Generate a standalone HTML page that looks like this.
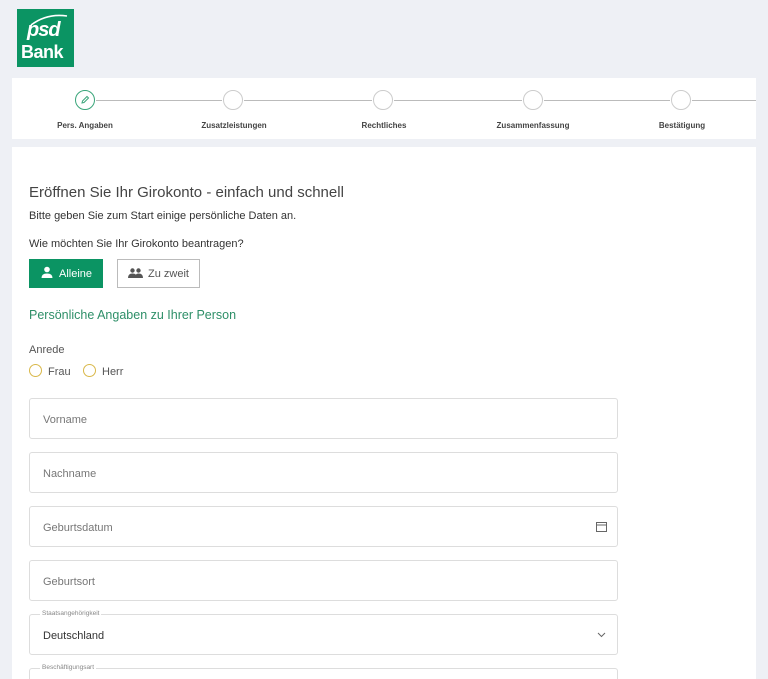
<!DOCTYPE html>
<html style="overflow:hidden;height:679px"><head><meta charset="utf-8"><style>
*{box-sizing:border-box;margin:0;padding:0}
body{width:768px;height:679px;overflow:hidden;background:#eef0f5;font-family:"Liberation Sans",sans-serif;color:#333;position:relative}
.logo{position:absolute;left:17px;top:9px;width:57px;height:58px;background:#0b9463;color:#fff}
.card1{position:absolute;left:12px;top:78px;width:744px;height:61px;background:#fff}
.card2{position:absolute;left:12px;top:147px;width:744px;height:532px;background:#fff}
.circ{position:absolute;top:90px;width:20px;height:20px;border:1px solid #ccc;border-radius:50%;background:#fff}
.line{position:absolute;top:100px;height:1px;background:#bbb}
.lab{position:absolute;top:121px;font-size:8px;font-weight:bold;color:#444;transform:translateX(-50%);white-space:nowrap}
.t{position:absolute;white-space:nowrap}
.inp{position:absolute;left:29px;width:589px;height:41px;border:1px solid #ddd;border-radius:3px;background:#fff}
.inp span{position:absolute;left:13px;top:15px;font-size:11px;color:#777}
.leg{position:absolute;left:10px;top:-5px;background:#fff;padding:0 2px;font-size:6.5px;color:#888}
.radio{position:absolute;width:13px;height:13px;border:1px solid #d9b84a;border-radius:50%}
</style></head><body>
<div class="logo">
<svg width="57" height="58" viewBox="0 0 57 58"><path d="M14 16 Q30 4 50 7" stroke="#fff" stroke-width="1.6" fill="none"/></svg>
<div class="t" style="left:10px;top:10px;font-size:20px;font-weight:bold;font-style:italic;letter-spacing:-1px">psd</div>
<div class="t" style="left:4px;top:33px;font-size:18px;font-weight:bold;letter-spacing:-0.5px">Bank</div>
</div>
<div class="card1"></div>
<div class="line" style="left:96px;width:126px"></div>
<div class="line" style="left:244px;width:128px"></div>
<div class="line" style="left:394px;width:128px"></div>
<div class="line" style="left:544px;width:126px"></div>
<div class="line" style="left:692px;width:64px"></div>
<div class="circ" style="left:75px;border-color:#3aa57a"><svg width="18" height="18" viewBox="0 0 18 18"><path d="M6 12 L6.5 10 L11 5.5 L12.5 7 L8 11.5 Z" stroke="#3aa57a" fill="none" stroke-width="1"/></svg></div>
<div class="circ" style="left:223px"></div>
<div class="circ" style="left:373px"></div>
<div class="circ" style="left:523px"></div>
<div class="circ" style="left:671px"></div>
<div class="lab" style="left:85px">Pers. Angaben</div>
<div class="lab" style="left:234px">Zusatzleistungen</div>
<div class="lab" style="left:384px">Rechtliches</div>
<div class="lab" style="left:533px">Zusammenfassung</div>
<div class="lab" style="left:682px">Bestätigung</div>
<div class="card2"></div>
<div class="t" style="left:29px;top:184px;font-size:15px;color:#444">Eröffnen Sie Ihr Girokonto - einfach und schnell</div>
<div class="t" style="left:29px;top:210px;font-size:11px">Bitte geben Sie zum Start einige persönliche Daten an.</div>
<div class="t" style="left:29px;top:238px;font-size:11px">Wie möchten Sie Ihr Girokonto beantragen?</div>
<div class="t" style="left:29px;top:259px;width:74px;height:29px;background:#0b9463;color:#fff;font-size:11px;line-height:31px;padding-left:30px">Alleine</div>
<svg class="t" style="left:41px;top:266px" width="12" height="12" viewBox="0 0 12 12"><circle cx="6" cy="3.5" r="2.8" fill="#fff"/><path d="M0.5 12 Q0.5 7.5 6 7.5 Q11.5 7.5 11.5 12Z" fill="#fff"/></svg>
<div class="t" style="left:117px;top:259px;width:83px;height:29px;border:1px solid #bbb;font-size:11px;line-height:29px;padding-left:30px;color:#555">Zu zweit</div>
<svg class="t" style="left:128px;top:268px" width="15" height="10" viewBox="0 0 15 10"><circle cx="4.5" cy="2.5" r="2.2" fill="#555"/><circle cx="10.5" cy="2.5" r="2.2" fill="#555"/><path d="M0 10 Q0 5.5 4.5 5.5 Q9 5.5 9 10Z M7 10 Q7 5.5 10.5 5.5 Q15 5.5 15 10Z" fill="#555"/></svg>
<div class="t" style="left:29px;top:308px;font-size:12.5px;color:#2e8f68">Persönliche Angaben zu Ihrer Person</div>
<div class="t" style="left:29px;top:344px;font-size:11px;color:#555">Anrede</div>
<div class="radio" style="left:29px;top:364px"></div>
<div class="t" style="left:48px;top:366px;font-size:11px;color:#555">Frau</div>
<div class="radio" style="left:83px;top:364px"></div>
<div class="t" style="left:102px;top:366px;font-size:11px;color:#555">Herr</div>
<div class="inp" style="top:398px"><span>Vorname</span></div>
<div class="inp" style="top:452px"><span>Nachname</span></div>
<div class="inp" style="top:506px"><span>Geburtsdatum</span>
<svg style="position:absolute;right:10px;top:14px" width="11" height="11" viewBox="0 0 11 11"><rect x="0.5" y="1.5" width="10" height="9" fill="none" stroke="#666"/><line x1="0.5" y1="4" x2="10.5" y2="4" stroke="#666"/></svg></div>
<div class="inp" style="top:560px"><span>Geburtsort</span></div>
<div class="inp" style="top:614px"><div class="leg">Staatsangehörigkeit</div><span style="color:#333">Deutschland</span>
<svg style="position:absolute;right:11px;top:17px" width="9" height="6" viewBox="0 0 9 6"><path d="M1 1 L4.5 4.5 L8 1" stroke="#666" fill="none"/></svg></div>
<div class="inp" style="top:668px"><div class="leg">Beschäftigungsart</div></div>
</body></html>
